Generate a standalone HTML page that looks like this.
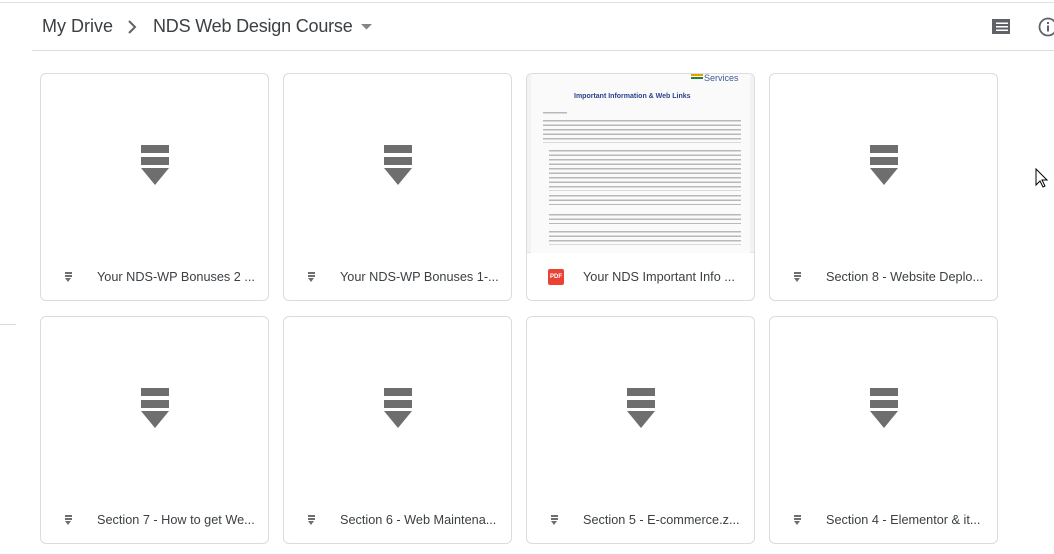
<!DOCTYPE html>
<html><head><meta charset="utf-8"><style>
*{margin:0;padding:0;box-sizing:border-box}
body{width:1054px;height:554px;background:#fff;position:relative;overflow:hidden;font-family:"Liberation Sans",Arial,sans-serif}
.topline{position:absolute;left:0;right:0;top:2px;height:1px;background:#e0e0e0}
.bcline{position:absolute;left:32px;right:0;top:50px;height:1px;background:#dadce0}
.bc{position:absolute;top:16px;font-size:18px;color:#3c4043;white-space:nowrap}
.card{position:absolute;width:229px;height:228px;border:1px solid #dadce0;border-radius:6px;background:#fff;overflow:hidden}
.big{position:absolute;left:100px;top:71px;width:28px}
.big .b{height:8px;background:#6e6e6e;margin-bottom:4px}
.big .t{width:0;height:0;border-left:14px solid transparent;border-right:14px solid transparent;border-top:17px solid #6e6e6e;margin-top:-1px}
.cap{position:absolute;left:0;top:189px;width:100%;height:30px}
.sm{position:absolute;left:24px;top:9px;width:7px}
.sm i{display:block;height:2px;background:#6e6e6e;margin-bottom:1px}
.sm b{display:block;width:0;height:0;border-left:3.5px solid transparent;border-right:3.5px solid transparent;border-top:4px solid #6e6e6e}
.txt{position:absolute;left:56px;top:7px;font-size:12.7px;color:#3c4043;white-space:nowrap}
.prev{position:absolute;left:0;top:0;width:100%;height:179px;background:#f1f3f4;border-bottom:1px solid #e3e3e3}
.doc{position:absolute;left:4px;top:0;width:219px;height:179px;background:#fafafa}
.p{position:absolute;left:12px;width:198px;background:repeating-linear-gradient(#a8a8a8 0 1.5px,transparent 1.5px 4.5px);opacity:.8}
</style></head><body>
<div class="topline"></div>
<div class="bc" style="left:42px">My Drive</div>
<svg style="position:absolute;left:125px;top:19px" width="14" height="16" viewBox="0 0 14 16"><path d="M4 2l6 6-6 6" fill="none" stroke="#5f6368" stroke-width="2"/></svg>
<div class="bc" style="left:153px;letter-spacing:-0.2px">NDS Web Design Course</div>
<svg style="position:absolute;left:361px;top:24px" width="12" height="6"><path d="M0 0h11l-5.5 5.5z" fill="#80868b"/></svg>
<div class="bcline"></div>
<svg style="position:absolute;left:992px;top:19px" width="18" height="15" viewBox="0 0 18 15"><rect x="0" y="0" width="18" height="15" fill="#5f6368"/><rect x="4" y="3.5" width="12" height="1.5" fill="#fff"/><rect x="4" y="7" width="12" height="1.5" fill="#fff"/><rect x="4" y="10.5" width="12" height="1.5" fill="#fff"/></svg>
<svg style="position:absolute;left:1038px;top:17px" width="20" height="20" viewBox="0 0 20 20"><circle cx="10" cy="10" r="8.5" fill="none" stroke="#5f6368" stroke-width="1.8"/><rect x="9" y="8.5" width="2" height="6" fill="#5f6368"/><rect x="9" y="5" width="2" height="2" fill="#5f6368"/></svg>
<div style="position:absolute;left:0;top:324px;width:16px;height:1px;background:#dadce0"></div>

<div class="card" style="left:40px;top:73px"><div class="big"><div class="b"></div><div class="b"></div><div class="t"></div></div><div class="cap"><div class="sm"><i></i><i></i><b></b></div><div class="txt">Your NDS-WP Bonuses 2 ...</div></div></div>
<div class="card" style="left:283px;top:73px"><div class="big"><div class="b"></div><div class="b"></div><div class="t"></div></div><div class="cap"><div class="sm"><i></i><i></i><b></b></div><div class="txt">Your NDS-WP Bonuses 1-...</div></div></div>
<div class="card" style="left:526px;top:73px">
 <div class="prev"><div class="doc">
  <div style="position:absolute;left:160px;top:0;width:12px;height:2px;background:#e6a200"></div>
  <div style="position:absolute;left:160px;top:3px;width:12px;height:2px;background:#2e7d32"></div>
  <div style="position:absolute;left:173px;top:-1px;font-size:9px;color:#3d5a99">Services</div>
  <div style="position:absolute;left:43px;top:19px;font-size:7px;font-weight:bold;color:#2a3f8f">Important Information &amp; Web Links</div>
  <div class="p" style="top:38px;width:24px;height:3px"></div>
  <div class="p" style="top:46px;height:23px"></div>
  <div class="p" style="top:76px;height:41px;left:18px;width:192px"></div>
  <div class="p" style="top:121px;height:10px;left:18px;width:192px"></div>
  <div class="p" style="top:140px;height:10px;left:18px;width:192px"></div>
  <div class="p" style="top:157px;height:14px;left:18px;width:192px"></div>
 </div></div>
 <div class="cap"><div style="position:absolute;left:21px;top:6px;width:16px;height:16px;background:#ea4335;border-radius:2px;color:#fff;font-size:6px;font-weight:bold;line-height:16px;text-align:center">PDF</div><div class="txt">Your NDS Important Info ...</div></div>
</div>
<div class="card" style="left:769px;top:73px"><div class="big"><div class="b"></div><div class="b"></div><div class="t"></div></div><div class="cap"><div class="sm"><i></i><i></i><b></b></div><div class="txt">Section 8 - Website Deplo...</div></div></div>

<div class="card" style="left:40px;top:316px"><div class="big"><div class="b"></div><div class="b"></div><div class="t"></div></div><div class="cap"><div class="sm"><i></i><i></i><b></b></div><div class="txt">Section 7 - How to get We...</div></div></div>
<div class="card" style="left:283px;top:316px"><div class="big"><div class="b"></div><div class="b"></div><div class="t"></div></div><div class="cap"><div class="sm"><i></i><i></i><b></b></div><div class="txt">Section 6 - Web Maintena...</div></div></div>
<div class="card" style="left:526px;top:316px"><div class="big"><div class="b"></div><div class="b"></div><div class="t"></div></div><div class="cap"><div class="sm"><i></i><i></i><b></b></div><div class="txt">Section 5 - E-commerce.z...</div></div></div>
<div class="card" style="left:769px;top:316px"><div class="big"><div class="b"></div><div class="b"></div><div class="t"></div></div><div class="cap"><div class="sm"><i></i><i></i><b></b></div><div class="txt">Section 4 - Elementor &amp; it...</div></div></div>

<svg style="position:absolute;left:1035px;top:168px" width="14" height="21" viewBox="0 0 14 21"><path d="M1 1v16l4-4 3 6 2-1-3-6h5z" fill="#fff" stroke="#000" stroke-width="1"/></svg>
</body></html>
